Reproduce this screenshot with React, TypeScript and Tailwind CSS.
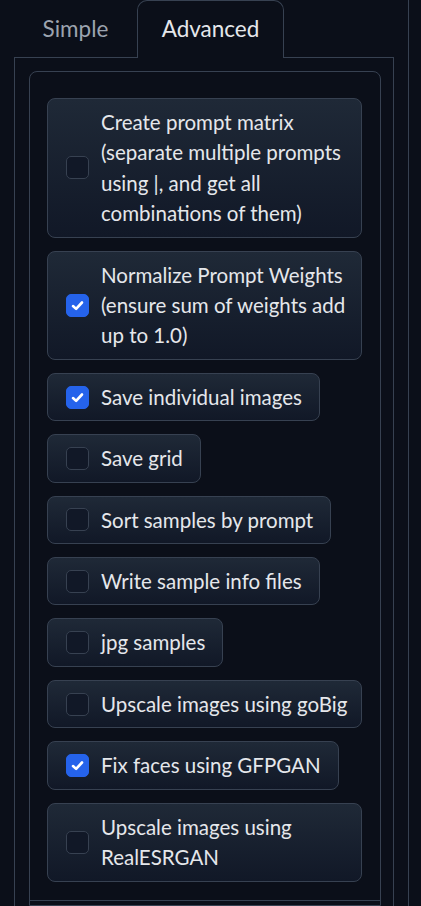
import React from "react";

type Item = { lines: string[]; checked: boolean };

const items: Item[] = [
  {
    lines: [
      "Create prompt matrix",
      "(separate multiple prompts",
      "using |, and get all",
      "combinations of them)",
    ],
    checked: false,
  },
  {
    lines: ["Normalize Prompt Weights", "(ensure sum of weights add", "up to 1.0)"],
    checked: true,
  },
  { lines: ["Save individual images"], checked: true },
  { lines: ["Save grid"], checked: false },
  { lines: ["Sort samples by prompt"], checked: false },
  { lines: ["Write sample info files"], checked: false },
  { lines: ["jpg samples"], checked: false },
  { lines: ["Upscale images using goBig"], checked: false },
  { lines: ["Fix faces using GFPGAN"], checked: true },
  { lines: ["Upscale images using", "RealESRGAN"], checked: false },
];

function Box({ checked }: { checked: boolean }) {
  if (checked) {
    return (
      <div className="w-[23px] h-[23px] shrink-0 rounded-[5px] bg-[#2563eb] border border-[#2563eb] flex items-center justify-center">
        <svg width="15" height="15" viewBox="0 0 16 16" fill="none">
          <path
            d="M3.2 8.6 L6.5 11.6 L12.8 4.8"
            stroke="white"
            strokeWidth="2.8"
            strokeLinecap="round"
            strokeLinejoin="round"
          />
        </svg>
      </div>
    );
  }
  return (
    <div className="w-[23px] h-[23px] shrink-0 rounded-[5px] bg-[#111827] border border-[#374151]" />
  );
}

export default function App() {
  return (
    <div
      className="h-[906px] overflow-hidden bg-[#0b0f19] flex text-[#e5e7eb]"
      style={{ fontFamily: "Lato, 'Noto Sans', sans-serif" }}
    >
      <div className="w-[409px] shrink-0 border-r border-[#374151] px-[14px] flex flex-col">
        <div className="flex h-[58px] items-stretch">
          <div className="w-[123px] flex items-center justify-center text-[22.5px] text-[#9ca3af] pb-[1px]">
            Simple
          </div>
          <div className="relative z-10 w-[147px] flex items-center justify-center text-[22.5px] text-[#e5e7eb] border border-b-0 border-[#374151] rounded-t-[10px] bg-[#0b0f19] pb-[1px]">
            Advanced
          </div>
        </div>
        <div className="-mt-[1px] flex-1 border border-[#374151] border-b-0 pl-[14px] pr-[12px] pt-[13px]">
          <div className="h-full border border-[#374151] rounded-t-[8px] flex flex-col">
            <div className="pt-[26px] pb-[18px] pl-[17px] pr-[18px] flex flex-col items-start gap-[13px]">
              {items.map((it, i) => (
                <label
                  key={i}
                  className={
                    (it.lines.length > 1 ? "self-stretch " : "") +
                    "max-w-full flex items-center gap-[12px] pl-[18px] pr-[17px] py-[8px] rounded-[8px] border border-[#374151] bg-gradient-to-b from-[#1f2937] to-[#111827] text-[20.5px] leading-[30.4px]"
                  }
                >
                  <Box checked={it.checked} />
                  <span className="whitespace-nowrap">
                    {it.lines.map((l, j) => (
                      <React.Fragment key={j}>
                        {j > 0 && <br />}
                        {l}
                      </React.Fragment>
                    ))}
                  </span>
                </label>
              ))}
            </div>
            <div className="flex-1 border-t border-[#374151]" />
          </div>
        </div>
      </div>
      <div className="flex-1" />
    </div>
  );
}
